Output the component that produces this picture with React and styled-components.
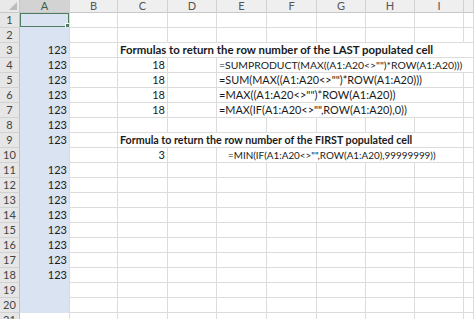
import React from "react"
import styled, { createGlobalStyle } from "styled-components"

const GlobalStyle = createGlobalStyle`
  * { box-sizing: border-box; }
  body { margin: 0; background: #fff; overflow: hidden; }
`

const COLS = ["A", "B", "C", "D", "E", "F", "G", "H", "I", "J"]
const TEMPLATE = "20px 50px 48px 50px 49px 50px 50px 49px 49px 49px 1fr"

const Sheet = styled.div`
  width: 474px;
  height: 319px;
  overflow: hidden;
  font-family: Lato, "Open Sans", sans-serif;
  font-size: 11px;
  color: #1a1a1a;
`

const Row = styled.div`
  display: grid;
  grid-template-columns: ${TEMPLATE};
  height: ${p => p.$h}px;
`

const Corner = styled.div`
  background: #e9e9e9;
  border-right: 1px solid #c8c8c8;
  border-bottom: 1px solid #c8c8c8;
  display: flex;
  align-items: flex-end;
  justify-content: flex-end;
  padding: 0 2px 2px 0;
`

const ColHead = styled.div`
  background: ${p => (p.$active ? "#d3d3d3" : "#efefef")};
  color: ${p => (p.$active ? "#3d5e48" : "#555")};
  border-right: 1px solid #d2d2d2;
  border-bottom: 1px solid #c8c8c8;
  text-align: center;
  line-height: 12px;
`

const RowHead = styled.div`
  background: #e6e6e6;
  color: #444;
  border-right: 1px solid #c0c0c0;
  border-bottom: 1px solid #d2d2d2;
  text-align: center;
  line-height: 14px;
`

const Cell = styled.div`
  grid-column: span ${p => p.$span || 1};
  position: relative;
  background: ${p => (p.$sel ? "#dae3f1" : "#fff")};
  border-right: 1px solid ${p => (p.$sel ? "#d2dbe9" : "#dcdcdc")};
  border-bottom: 1px solid ${p => (p.$sel ? "#dae3f1" : "#dcdcdc")};
  text-align: ${p => p.$align || "left"};
  font-weight: ${p => (p.$bold ? 700 : 400)};
  font-size: ${p => p.$size || 11}px;
  padding: 0 2px 0 ${p => 2 + (p.$indent || 0)}px;
  line-height: 14px;
  white-space: nowrap;
  overflow: hidden;
`

const ActiveFrame = styled.div`
  position: absolute;
  left: -1px;
  top: -1px;
  right: -1px;
  bottom: -1px;
  border: 2px solid #4f7d5f;
  pointer-events: none;

  &::after {
    content: "";
    position: absolute;
    right: -4px;
    bottom: -4px;
    width: 5px;
    height: 5px;
    background: #4f7d5f;
    border: 1px solid #fff;
  }
`

const LAST = "Formulas to return the row number of the LAST populated cell"
const FIRST = "Formula to return the row number of the FIRST populated cell"

// cells per row, keyed by row number; anything missing is an empty cell
const DATA = {
  3: [{ col: "A", text: "123" }, { col: "C", span: 8, text: LAST, bold: true, size: 11.4 }],
  4: [{ col: "A", text: "123" }, { col: "C", text: "18" }, { col: "E", span: 6, text: '=SUMPRODUCT(MAX((A1:A20<>"")*ROW(A1:A20)))', left: true, size: 10.4 }],
  5: [{ col: "A", text: "123" }, { col: "C", text: "18" }, { col: "E", span: 5, text: '=SUM(MAX((A1:A20<>"")*ROW(A1:A20)))', left: true, size: 10.9 }],
  6: [{ col: "A", text: "123" }, { col: "C", text: "18" }, { col: "E", span: 5, text: '=MAX((A1:A20<>"")*ROW(A1:A20))', left: true, size: 11.1 }],
  7: [{ col: "A", text: "123" }, { col: "C", text: "18" }, { col: "E", span: 5, text: '=MAX(IF(A1:A20<>"",ROW(A1:A20),0))', left: true, size: 10.9 }],
  8: [{ col: "A", text: "123" }],
  9: [{ col: "A", text: "123" }, { col: "C", span: 7, text: FIRST, bold: true, size: 10.7 }],
  10: [{ col: "C", text: "3" }, { col: "E", span: 5, text: '=MIN(IF(A1:A20<>"",ROW(A1:A20),99999999))', left: true, indent: 9, size: 9.9 }],
}
for (let r = 11; r <= 18; r++) DATA[r] = [{ col: "A", text: "123" }]

function buildCells(r) {
  const given = DATA[r] || []
  const cells = []
  let i = 0
  while (i < COLS.length) {
    const c = given.find(g => g.col === COLS[i])
    if (c) {
      cells.push({ ...c, idx: i })
      i += c.span || 1
    } else {
      cells.push({ col: COLS[i], idx: i })
      i += 1
    }
  }
  return cells
}

function SelectAll() {
  return (
    <Corner>
      <svg width="8" height="8" viewBox="0 0 8 8">
        <polygon points="8,0 8,8 0,8" fill="#bcbcbc" />
      </svg>
    </Corner>
  )
}

export default function App() {
  const rows = Array.from({ length: 21 }, (_, i) => i + 1)
  return (
    <Sheet>
      <GlobalStyle />
      <Row $h={13}>
        <SelectAll />
        {COLS.map(c => (
          <ColHead key={c} $active={c === "A"}>{c === "J" ? "" : c}</ColHead>
        ))}
      </Row>
      {rows.map(r => (
        <Row key={r} $h={15}>
          <RowHead>{r}</RowHead>
          {buildCells(r).map(c => (
            <Cell
              key={c.col}
              $span={c.span}
              $sel={c.col === "A" && r <= 20}
              $bold={c.bold}
              $size={c.size}
              $indent={c.indent}
              $align={c.bold || c.left ? "left" : "right"}
            >
              {c.text}
              {c.col === "A" && r === 1 && <ActiveFrame />}
            </Cell>
          ))}
        </Row>
      ))}
    </Sheet>
  )
}
